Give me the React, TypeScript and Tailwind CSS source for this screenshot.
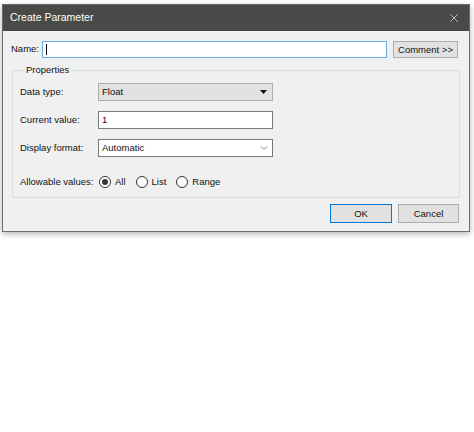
import { ChevronDown, X } from 'lucide-react'

const font = { fontFamily: '"Liberation Sans", Arial, sans-serif' }

function Radio({ label, checked }: { label: string; checked?: boolean }) {
  return (
    <div className="flex items-center gap-[4px]">
      <span className="flex h-[12px] w-[12px] items-center justify-center rounded-full border border-[#333333] bg-white">
        {checked && <span className="h-[6px] w-[6px] rounded-full bg-[#333333]" />}
      </span>
      <span>{label}</span>
    </div>
  )
}

function FieldRow({ label, children }: { label: string; children: React.ReactNode }) {
  return (
    <div className="flex h-[18px] items-center">
      <span className="w-[78px] shrink-0">{label}</span>
      {children}
    </div>
  )
}

export default function App() {
  return (
    <div className="h-[432px] w-[474px] bg-white pl-[2px] pt-[4px]" style={font}>
      <div className="w-[468px] border border-[#6b6b6b] bg-[#f0f0f0] text-[9.5px] text-[#111111] shadow-[0_2px_6px_rgba(0,0,0,0.3)]">
        <div className="flex h-[26px] items-center justify-between bg-[#494947] pl-[7px] pr-[8px] text-[10.5px] text-white">
          <span>Create Parameter</span>
          <X className="h-[14px] w-[14px] text-[#e0e0e0]" strokeWidth={1.3} />
        </div>

        <div className="px-[7px] pb-[8px] pt-[10px]">
          <div className="flex items-center">
            <span className="w-[32px] shrink-0 pl-[1px]">Name:</span>
            <div className="flex h-[17px] w-[345px] items-center border border-[#6fa8dc] bg-white pl-[3px]">
              <span className="h-[11px] w-px bg-black" />
            </div>
            <button className="ml-[6px] h-[17px] w-[65px] border border-[#adadad] bg-[#e1e1e1] leading-none">
              Comment &gt;&gt;
            </button>
          </div>

          <fieldset className="mt-[6px] ml-[2px] w-[448px] border border-[#dcdcdc] pb-[8px] pl-[7px] pr-[7px] pt-[7px]">
            <legend className="ml-[5px] px-[1px] leading-[12px]">Properties</legend>
            <div className="flex flex-col gap-[10px]">
              <FieldRow label="Data type:">
                <div className="flex h-[18px] w-[175px] items-center justify-between border border-[#adadad] bg-[#e1e1e1] pl-[3px] pr-[5px]">
                  <span>Float</span>
                  <svg width="7" height="4" viewBox="0 0 7 4">
                    <path d="M0 0H7L3.5 4Z" fill="#111" />
                  </svg>
                </div>
              </FieldRow>
              <FieldRow label="Current value:">
                <div className="flex h-[18px] w-[175px] items-center border border-[#7a7a7a] bg-white pl-[3px]">1</div>
              </FieldRow>
              <FieldRow label="Display format:">
                <div className="flex h-[18px] w-[175px] items-center justify-between border border-[#7a7a7a] bg-white pl-[3px] pr-[2px]">
                  <span>Automatic</span>
                  <ChevronDown className="h-[12px] w-[12px] text-[#555]" strokeWidth={1.5} />
                </div>
              </FieldRow>
              <div className="mt-[8px] flex h-[14px] items-center">
                <span className="w-[79px] shrink-0">Allowable values:</span>
                <div className="flex items-center gap-[10px]">
                  <Radio label="All" checked />
                  <Radio label="List" />
                  <Radio label="Range" />
                </div>
              </div>
            </div>
          </fieldset>

          <div className="mt-[6px] flex justify-end gap-[6px] pr-[3px]">
            <button className="h-[19px] w-[62px] border border-[#0078d7] bg-[#e1e1e1] leading-none">OK</button>
            <button className="h-[19px] w-[61px] border border-[#adadad] bg-[#e1e1e1] leading-none">Cancel</button>
          </div>
        </div>
      </div>
    </div>
  )
}
